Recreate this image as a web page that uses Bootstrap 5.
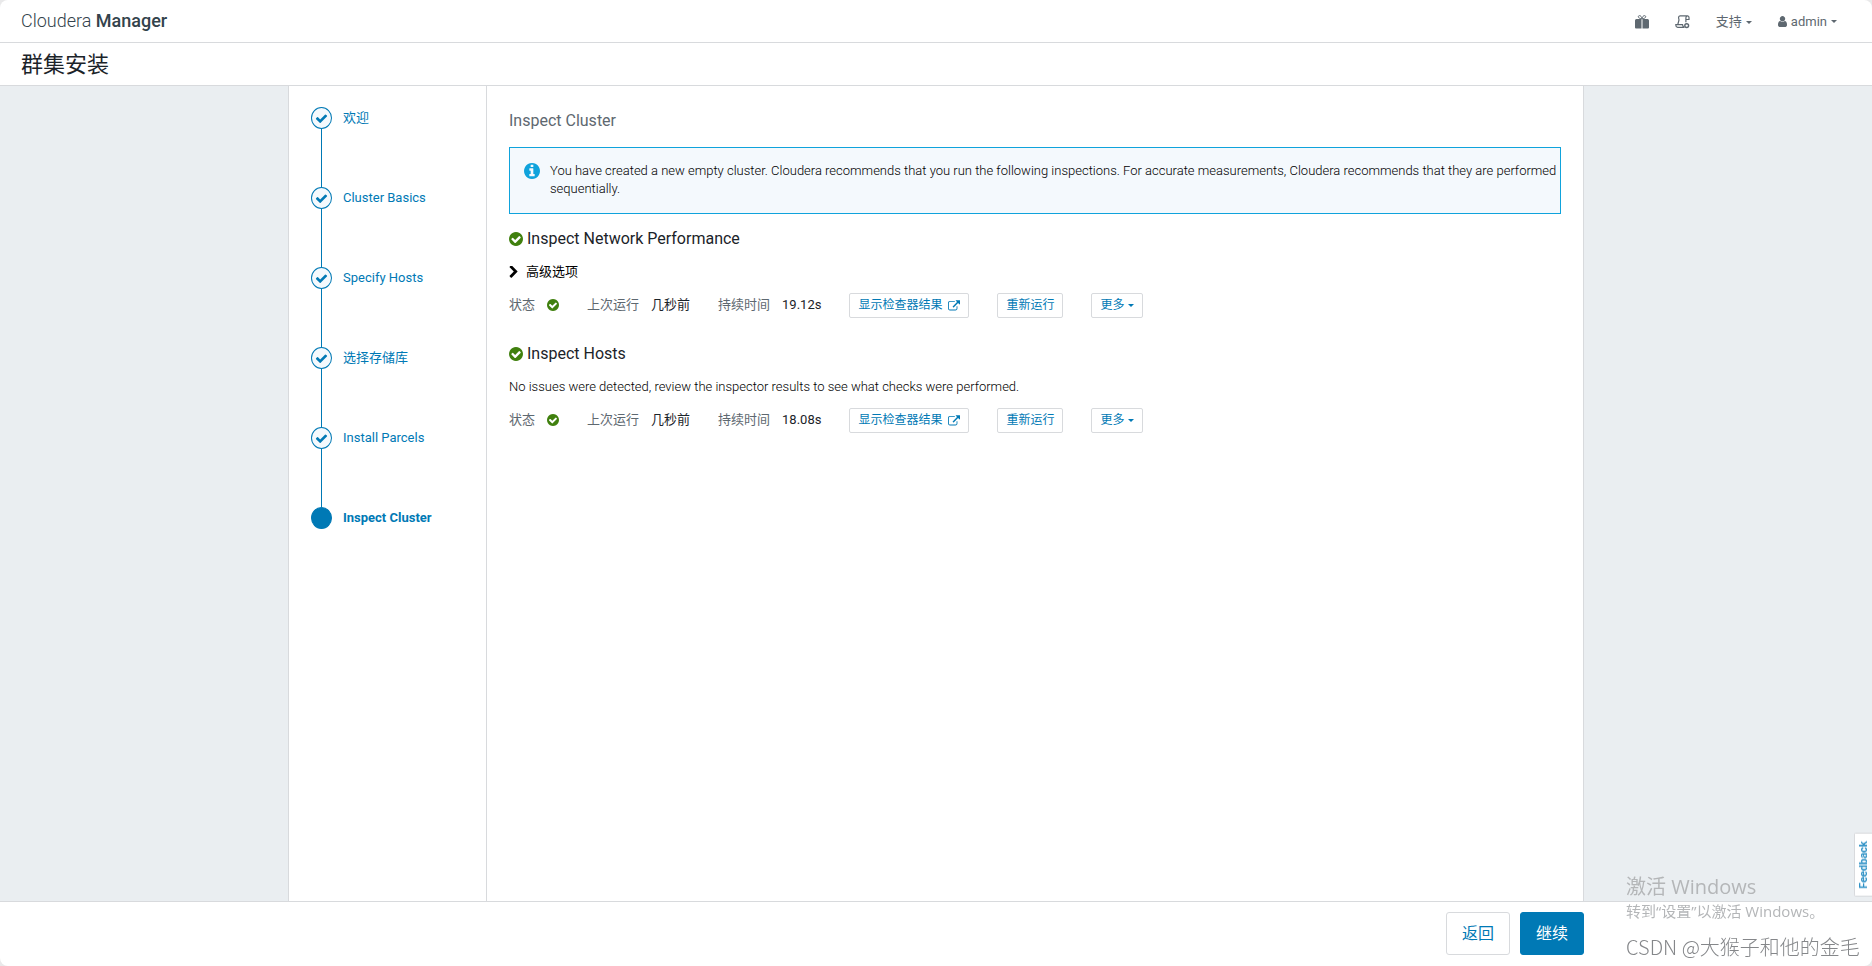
<!DOCTYPE html>
<html lang="zh-CN">
<head>
<meta charset="utf-8">
<meta name="viewport" content="width=device-width, initial-scale=1">
<title>群集安装 - Cloudera Manager</title>
<link href="https://cdn.jsdelivr.net/npm/bootstrap@5.3.0/dist/css/bootstrap.min.css" rel="stylesheet">
<style>
  :root { --cm-blue: #0079b5; --cm-line: #d8dadd; --cm-grey: #5e6870; --cm-ink: #1b2329; --cm-green: #40800e; }
  html { background: #e9e9ea; }
  body {
    font-family: Roboto, "Noto Sans CJK SC", sans-serif; font-size: 13px; line-height: 18px;
    color: var(--cm-ink); background: transparent;
  }
  a { color: var(--cm-blue); text-decoration: none; }
  .app-shell { background: #fff; border-radius: 8px; }
  .top-bar, .title-bar { height: 43px; padding: 0 21px; border-bottom: 1px solid var(--cm-line); }
  .title-bar { padding-top: 2px; }
  .brand-name { font-size: 18px; line-height: 24px; font-weight: 300; color: #33434c; }
  .brand-name strong { font-weight: 500; }
  .top-links { gap: 26px; padding: 1px 14px 0 0; }
  .top-links a, .top-links button { color: var(--cm-grey); }
  .plain-btn { border: 0; background: none; padding: 0; }
  .caret-down::after { content: ""; display: inline-block; margin-left: 4px; vertical-align: 2px; border: 3px solid transparent; border-top-color: currentColor; border-bottom: 0; }
  .page-title { font-size: 22px; line-height: 28px; font-weight: 400; color: var(--cm-ink); }
  .stage { background: #eaeef1; }
  .wizard { width: 1296px; max-width: 100%; background: #fff; border: solid var(--cm-line); border-width: 0 1px; }
  .steps-pane { width: 198px; padding: 21px 22px; border-right: 1px solid var(--cm-line); }
  .step-item { position: relative; height: 80px; }
  .step-item:not(:last-child)::after { content: ""; position: absolute; left: 10px; top: 22px; bottom: 0; width: 1px; background: var(--cm-blue); }
  .step-item a { gap: 11px; line-height: 22px; }
  .step-dot { width: 21px; height: 22px; border: 1px solid var(--cm-blue); border-radius: 50%; background: #f4f9fd; }
  .step-dot.current { background: var(--cm-blue); }
  svg { display: block; flex: none; fill: currentColor; }
  .content-pane { padding: 24px 22px; }
  .pane-heading { font-size: 16px; line-height: 22px; font-weight: 400; color: var(--cm-grey); margin-bottom: 15px; }
  .info-box { border: 1px solid #0fa3dc; background: #f4f9fd; padding: 14px 2px 15px 14px; gap: 10px; margin-bottom: 14px; }
  .info-box svg { color: #0fa3dc; margin-top: 1px; }
  .info-box p, p.detail-line { font-weight: 300; color: #000; }
  .check-heading { font-size: 16px; line-height: 22px; font-weight: 400; gap: 4px; margin-bottom: 13px; }
  .ok-mark { color: var(--cm-green); }
  .detail-line { margin-bottom: 12px; }
  .status-row { gap: 28px; }
  .status-pair { gap: 12px; margin: 0; line-height: 23px; }
  .status-pair dt { font-weight: 400; color: var(--cm-grey); }
  .status-pair dd { margin: 0; }
  .mini-btn { font-size: 12px; line-height: 17px; padding: 3px 8px; gap: 6px; color: var(--cm-blue); background: #fff; border: 1px solid var(--cm-line); border-radius: 2px; }
  .inspection + .inspection { margin-top: 25px; }
  .foot-bar { border-top: 1px solid var(--cm-line); padding: 10px 0 11px; }
  .foot-inner { width: 1296px; max-width: 100%; gap: 10px; }
  .foot-btn { font-size: 16px; line-height: 23px; padding: 9px 15px; border: 1px solid var(--cm-line); border-radius: 3px; color: var(--cm-blue); background: #fff; }
  .foot-btn.main-action { color: #fff; background: var(--cm-blue); border-color: var(--cm-blue); }
  .feedback-tab { position: fixed; right: 0; bottom: 69px; writing-mode: vertical-rl; transform: rotate(180deg); font: bold 11px/16px Roboto, sans-serif; color: #2f92c6; background: #fff; border: 1px solid var(--cm-line); border-left: 0; border-radius: 0 2px 2px 0; padding: 7px 1px 7px 0; }
  .activation-note { position: fixed; right: 16px; bottom: 8px; width: 230px; font-family: "Open Sans", "Noto Sans CJK SC", sans-serif; color: #b4b6b8; pointer-events: none; }
  .activation-note .note-title { font-size: 20px; line-height: 26px; }
  .activation-note .note-text { font-size: 15px; line-height: 22px; }
  .activation-note .note-author { font-family: "Noto Sans CJK SC", sans-serif; font-size: 20px; line-height: 22px; font-weight: 300; margin-top: 14px; color: #85878a; white-space: nowrap; }
</style>
</head>
<body>
<svg width="0" height="0" class="position-absolute" aria-hidden="true">
  <symbol id="i-ok" viewBox="128 128 1536 1536"><path d="M1412 734q0-28-18-46l-91-90q-19-19-45-19t-45 19l-408 407-226-226q-19-19-45-19t-45 19l-91 90q-18 18-18 46 0 27 18 45l362 362q19 19 45 19 27 0 46-19l543-543q18-18 18-45zm252 162q0 209-103 385.5t-279.5 279.5-385.5 103-385.5-103-279.5-279.5-103-385.5 103-385.5 279.5-279.5 385.5-103 385.5 103 279.5 279.5 103 385.5z"/></symbol>
  <symbol id="i-info" viewBox="128 128 1536 1536"><path d="M1152 1376v-160q0-14-9-23t-23-9h-96v-512q0-14-9-23t-23-9h-320q-14 0-23 9t-9 23v160q0 14 9 23t23 9h96v320h-96q-14 0-23 9t-9 23v160q0 14 9 23t23 9h448q14 0 23-9t9-23zm-128-896v-160q0-14-9-23t-23-9h-192q-14 0-23 9t-9 23v160q0 14 9 23t23 9h192q14 0 23-9t9-23zm640 416q0 209-103 385.5t-279.5 279.5-385.5 103-385.5-103-279.5-279.5-103-385.5 103-385.5 279.5-279.5 385.5-103 385.5 103 279.5 279.5 103 385.5z"/></symbol>
  <symbol id="i-check" viewBox="0 0 1792 1792"><path d="M1671 566q0 40-28 68l-724 724-136 136q-28 28-68 28t-68-28l-136-136-362-362q-28-28-28-68t28-68l136-136q28-28 68-28t68 28l294 295 656-657q28-28 68-28t68 28l136 136q28 28 28 68z"/></symbol>
  <symbol id="i-out" viewBox="0 0 1792 1600"><path d="M1408 928v320q0 119-84.5 203.5t-203.5 84.5h-832q-119 0-203.5-84.5t-84.5-203.5v-832q0-119 84.5-203.5t203.5-84.5h704q14 0 23 9t9 23v64q0 14-9 23t-23 9h-704q-66 0-113 47t-47 113v832q0 66 47 113t113 47h832q66 0 113-47t47-113v-320q0-14 9-23t23-9h64q14 0 23 9t9 23zm384-864v512q0 26-19 45t-45 19-45-19l-176-176-652 652q-10 10-23 10t-23-10l-114-114q-10-10-10-23t10-23l652-652-176-176q-19-19-19-45t19-45 45-19h512q26 0 45 19t19 45z"/></symbol>
</svg>
<div class="app-shell min-vh-100 d-flex flex-column">
  <header class="top-bar d-flex align-items-center justify-content-between">
    <a href="#" class="brand-name">Cloudera <strong>Manager</strong></a>
    <nav class="top-links d-flex align-items-center">
      <a href="#" aria-label="新增功能"><svg width="14" height="14" viewBox="0 0 14 14"><path d="M0 5.500Q0 4 1.400 4H6.500V13.500H1Q0 13.500 0 12.500zM7.500 4h5.100Q14 4 14 5.500v7q0 1-1 1H7.500z"/><path d="M6.800 3.800C6.500 1.400 5.500.6 4.600.6 3.500.6 2.900 1.600 3.500 2.400c.6.8 1.900 1.200 3.300 1.400zm.4 0C7.500 1.400 8.500.6 9.400.6c1.100 0 1.700 1 1.100 1.800-.6.8-1.900 1.200-3.300 1.400z" fill="none" stroke="currentColor"/></svg></a>
      <a href="#" aria-label="命令" class="d-block"><svg width="15" height="14" viewBox="0 0 15 14"><g fill="none" stroke="currentColor" stroke-width="1.200"><path d="M5 .8h7.600q1.500.2 1.400 1.900v1.800h-3.200M12.400.8q-1.500.2-1.500 2v4.400M5 .8Q3.400 1 3.600 3l.4 2-1.200 4.500M2.800 9.600H.8q-.2 2.600 1.900 2.800h6.800M.8 9.600h6.700q.2 2.500 2 2.800"/></g><circle cx="11.700" cy="10.600" r="1.900" fill="none" stroke="currentColor" stroke-width="1.400"/></svg></a>
      <button type="button" class="plain-btn caret-down">支持</button>
      <button type="button" class="plain-btn caret-down d-flex align-items-center"><svg width="9" height="11" viewBox="256 128 1280 1536" class="me-1"><path d="M1536 1399q0 109-62.500 187t-150.500 78h-854q-88 0-150.500-78t-62.500-187q0-85 8.500-160.500t31.500-152 58.500-131 94-89 134.500-34.500q131 128 313 128t313-128q76 0 134.500 34.500t94 89 58.500 131 31.500 152 8.500 160.500zm-256-887q0 159-112.500 271.500t-271.500 112.500-271.500-112.500-112.500-271.500 112.500-271.500 271.500-112.500 271.500 112.500 112.500 271.500z"/></svg>admin</button>
    </nav>
  </header>
  <div class="title-bar d-flex align-items-center"><h1 class="page-title mb-0">群集安装</h1></div>

  <main class="stage flex-grow-1 d-flex justify-content-center">
    <div class="wizard d-flex">
      <nav class="steps-pane flex-shrink-0" aria-label="步骤">
        <ol class="list-unstyled mb-0">
          <li class="step-item"><a href="#" class="d-flex"><span class="step-dot d-flex align-items-center justify-content-center"><svg width="13" height="13"><use href="#i-check"/></svg></span>欢迎</a></li>
          <li class="step-item"><a href="#" class="d-flex"><span class="step-dot d-flex align-items-center justify-content-center"><svg width="13" height="13"><use href="#i-check"/></svg></span>Cluster Basics</a></li>
          <li class="step-item"><a href="#" class="d-flex"><span class="step-dot d-flex align-items-center justify-content-center"><svg width="13" height="13"><use href="#i-check"/></svg></span>Specify Hosts</a></li>
          <li class="step-item"><a href="#" class="d-flex"><span class="step-dot d-flex align-items-center justify-content-center"><svg width="13" height="13"><use href="#i-check"/></svg></span>选择存储库</a></li>
          <li class="step-item"><a href="#" class="d-flex"><span class="step-dot d-flex align-items-center justify-content-center"><svg width="13" height="13"><use href="#i-check"/></svg></span>Install Parcels</a></li>
          <li class="step-item"><a href="#" class="d-flex fw-bold" aria-current="step"><span class="step-dot current"></span>Inspect Cluster</a></li>
        </ol>
      </nav>
      <div class="content-pane flex-grow-1">
        <h2 class="pane-heading">Inspect Cluster</h2>
        <div class="info-box d-flex align-items-start" role="note">
          <svg width="16" height="16"><use href="#i-info"/></svg>
          <p class="mb-0">You have created a new empty cluster. Cloudera recommends that you run the following inspections. For accurate measurements, Cloudera recommends that they are performed sequentially.</p>
        </div>

        <section class="inspection">
          <h3 class="check-heading d-flex align-items-center"><svg width="14" height="14" class="ok-mark"><use href="#i-ok"/></svg>Inspect Network Performance</h3>
          <button type="button" class="plain-btn detail-line d-flex align-items-center gap-2"><svg width="9" height="12" viewBox="320 128 1080 1536"><path d="M1363 877l-742 742q-19 19-45 19t-45-19l-166-166q-19-19-19-45t19-45l531-531-531-531q-19-19-19-45t19-45l166-166q19-19 45-19t45 19l742 742q19 19 19 45t-19 45z"/></svg>高级选项</button>
          <div class="status-row d-flex align-items-start flex-wrap">
            <dl class="status-pair d-flex align-items-center"><dt>状态</dt><dd><svg width="12" height="12" class="ok-mark"><use href="#i-ok"/></svg></dd></dl>
            <dl class="status-pair d-flex"><dt>上次运行</dt><dd>几秒前</dd></dl>
            <dl class="status-pair d-flex"><dt>持续时间</dt><dd>19.12s</dd></dl>
            <button type="button" class="mini-btn d-flex align-items-center">显示检查器结果<svg width="12" height="11"><use href="#i-out"/></svg></button>
            <button type="button" class="mini-btn">重新运行</button>
            <button type="button" class="mini-btn caret-down">更多</button>
          </div>
        </section>

        <section class="inspection">
          <h3 class="check-heading d-flex align-items-center"><svg width="14" height="14" class="ok-mark"><use href="#i-ok"/></svg>Inspect Hosts</h3>
          <p class="detail-line">No issues were detected, review the inspector results to see what checks were performed.</p>
          <div class="status-row d-flex align-items-start flex-wrap">
            <dl class="status-pair d-flex align-items-center"><dt>状态</dt><dd><svg width="12" height="12" class="ok-mark"><use href="#i-ok"/></svg></dd></dl>
            <dl class="status-pair d-flex"><dt>上次运行</dt><dd>几秒前</dd></dl>
            <dl class="status-pair d-flex"><dt>持续时间</dt><dd>18.08s</dd></dl>
            <button type="button" class="mini-btn d-flex align-items-center">显示检查器结果<svg width="12" height="11"><use href="#i-out"/></svg></button>
            <button type="button" class="mini-btn">重新运行</button>
            <button type="button" class="mini-btn caret-down">更多</button>
          </div>
        </section>
      </div>
    </div>
  </main>

  <footer class="foot-bar">
    <div class="foot-inner mx-auto d-flex justify-content-end">
      <button type="button" class="foot-btn">返回</button>
      <button type="button" class="foot-btn main-action">继续</button>
    </div>
  </footer>
</div>
<button type="button" class="feedback-tab">Feedback</button>
<div class="activation-note">
  <div class="note-title">激活 Windows</div>
  <div class="note-text">转到“设置”以激活 Windows。</div>
  <div class="note-author">CSDN @大猴子和他的金毛</div>
</div>
<script src="https://cdn.jsdelivr.net/npm/bootstrap@5.3.0/dist/js/bootstrap.bundle.min.js"></script>
</body>
</html>
